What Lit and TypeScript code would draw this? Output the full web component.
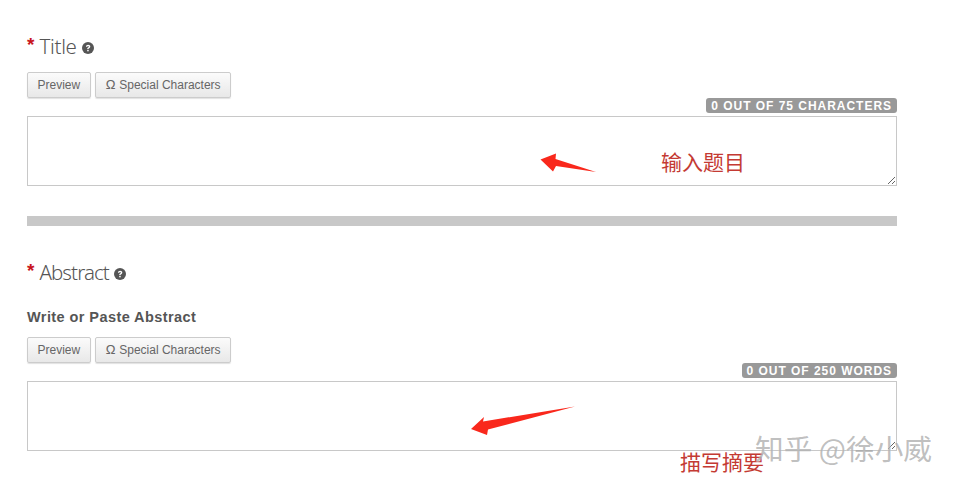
import { LitElement, html, css, svg } from "lit";
import { customElement } from "lit/decorators.js";

const help = html`<svg class="help" viewBox="0 0 12 12" aria-hidden="true"><circle cx="6" cy="6" r="6" fill="#555"/><path d="M3.9 4.7C4 3.4 4.9 2.7 6.1 2.7c1.3 0 2.2.7 2.2 1.8 0 .9-.5 1.3-1.1 1.7-.4.3-.6.4-.6.9H5.2c0-1 .3-1.3.9-1.7.4-.3.7-.5.7-.9 0-.3-.3-.6-.7-.6-.5 0-.8.3-.8.8z" fill="#fff"/><rect x="5.2" y="7.8" width="1.5" height="1.5" fill="#fff"/></svg>`;

const tools = html`<div class="tools"><button class="btn">Preview</button><button class="btn"><span class="omega">Ω</span> Special Characters</button></div>`;

@customElement("app-root")
export class AppRoot extends LitElement {
  static styles = css`
    :host { display: block; position: relative; width: 957px; height: 487px; overflow: hidden; background: #fff; font-family: "Liberation Sans", Arial, sans-serif; }
    .page { width: 870px; padding: 33px 0 0 27px; display: flex; flex-direction: column; }
    .heading { display: flex; align-items: center; height: 25px; font-family: "Noto Sans", sans-serif; font-weight: 300; font-size: 20.5px; letter-spacing: -0.3px; color: #555; }
    .star { color: #c8161d; font-size: 19px; margin-right: 5px; font-family: "Liberation Sans", sans-serif; font-weight: 700; position: relative; top: -1px; letter-spacing: 0; }
    .help { width: 12px; height: 12px; margin-left: 5px; position: relative; top: 2px; }
    .tools { display: flex; gap: 4px; }
    .btn { height: 26px; padding: 0 9.5px; box-sizing: border-box; border: 1px solid #ccc; border-radius: 2px; background: linear-gradient(#fbfbfb, #e8e8e8); box-shadow: 0 1px 1px rgba(0,0,0,.12); color: #666; font: 12px/24px "Liberation Sans", Arial, sans-serif; white-space: nowrap; }
    .omega { font-size: 13px; line-height: 1; margin: 0 0.5px; }
    .count { align-self: flex-end; height: 15px; line-height: 16px; padding: 0 5px; border-radius: 3px; background: #999; color: #fff; font-size: 12px; font-weight: 700; letter-spacing: 0.97px; white-space: nowrap; margin-bottom: 3px; }
    textarea { display: block; width: 870px; height: 70px; box-sizing: border-box; margin: 0; border: 1px solid #c8c8c8; background: #fff; outline: none; resize: vertical; }
    .gap-title { margin-top: 14px; }
    .rule { height: 10px; background: #c8c8c8; margin-top: 30px; }
    .abstract { margin-top: 33px; letter-spacing: -0.9px; }
    .sub { margin-top: 23px; height: 20px; line-height: 20px; font-size: 14.5px; font-weight: 700; color: #555; letter-spacing: 0.42px; }
    .gap-sub { margin-top: 10px; }
    .marks { position: absolute; inset: 0; width: 957px; height: 487px; pointer-events: none; }
    .note { position: absolute; font: 21px/28px "Noto Sans CJK SC", sans-serif; color: #c43a33; white-space: nowrap; }
    .n1 { left: 661px; top: 147px; }
    .n2 { left: 680px; top: 447px; }
    .mark { position: absolute; left: 755px; top: 429px; font: 28.7px/38px "Noto Sans CJK SC", sans-serif; color: rgba(160,160,160,.68); text-shadow: 0 1px 1px rgba(255,255,255,.5); white-space: nowrap; }
  `;

  render() {
    return html`
      <div class="page">
        <div class="heading"><span class="star">*</span>Title${help}</div>
        <div class="gap-title">${tools}</div>
        <span class="count">0 OUT OF 75 CHARACTERS</span>
        <textarea></textarea>
        <div class="rule"></div>
        <div class="heading abstract"><span class="star">*</span>Abstract${help}</div>
        <div class="sub">Write or Paste Abstract</div>
        <div class="gap-sub">${tools}</div>
        <span class="count">0 OUT OF 250 WORDS</span>
        <textarea></textarea>
      </div>
      <svg class="marks" viewBox="0 0 957 487" aria-hidden="true">
        ${svg`<polygon fill="#f9281c" points="540.5,159.5 556,153.5 555.5,159 596,172 556,166 553,171.5"/>
        <polygon fill="#f9281c" points="471,429 484,417 483,421.5 575,406.5 488,429.5 487,435"/>`}
      </svg>
      <span class="note n1">输入题目</span>
      <span class="note n2">描写摘要</span>
      <span class="mark">知乎 @徐小威</span>
    `;
  }
}
